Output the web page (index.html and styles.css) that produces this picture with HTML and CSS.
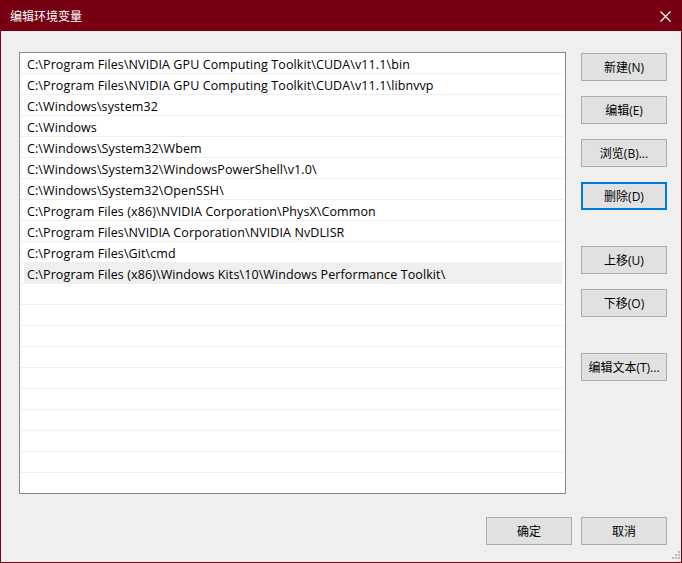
FILE: index.html
```html
<!DOCTYPE html>
<html lang="zh-CN">

<head>
    <meta charset="utf-8">
    <title>编辑环境变量</title>
    <link rel="stylesheet" href="styles.css">
</head>

<body>
    <div class="vindue">
        <div class="titel">
            <span>编辑环境变量</span>
            <svg class="luk" width="11" height="11" viewBox="0 0 11 11">
                <path d="M0.5 0.5 L10.5 10.5 M10.5 0.5 L0.5 10.5" stroke="#fff" stroke-width="1.1" fill="none"/>
            </svg>
        </div>

        <div class="indhold">
            <div class="hoved">
                <div class="liste">
                    <div class="linje"><span>C:\Program Files\NVIDIA GPU Computing Toolkit\CUDA\v11.1\bin</span></div>
                    <div class="linje"><span>C:\Program Files\NVIDIA GPU Computing Toolkit\CUDA\v11.1\libnvvp</span></div>
                    <div class="linje"><span>C:\Windows\system32</span></div>
                    <div class="linje"><span>C:\Windows</span></div>
                    <div class="linje"><span>C:\Windows\System32\Wbem</span></div>
                    <div class="linje"><span>C:\Windows\System32\WindowsPowerShell\v1.0\</span></div>
                    <div class="linje"><span>C:\Windows\System32\OpenSSH\</span></div>
                    <div class="linje"><span>C:\Program Files (x86)\NVIDIA Corporation\PhysX\Common</span></div>
                    <div class="linje"><span>C:\Program Files\NVIDIA Corporation\NVIDIA NvDLISR</span></div>
                    <div class="linje"><span>C:\Program Files\Git\cmd</span></div>
                    <div class="linje valgt"><span>C:\Program Files (x86)\Windows Kits\10\Windows Performance Toolkit\</span></div>
                    <div class="linje"><span></span></div>
                    <div class="linje"><span></span></div>
                    <div class="linje"><span></span></div>
                    <div class="linje"><span></span></div>
                    <div class="linje"><span></span></div>
                    <div class="linje"><span></span></div>
                    <div class="linje"><span></span></div>
                    <div class="linje"><span></span></div>
                    <div class="linje"><span></span></div>
                    <div class="linje"><span></span></div>
                </div>

                <div class="knapper">
                    <button class="knap">新建(N)</button>
                    <button class="knap">编辑(E)</button>
                    <button class="knap">浏览(B)...</button>
                    <button class="knap fokus">删除(D)</button>
                    <button class="knap ny-gruppe">上移(U)</button>
                    <button class="knap">下移(O)</button>
                    <button class="knap ny-gruppe">编辑文本(T)...</button>
                </div>
            </div>

            <div class="bund">
                <button class="knap">确定</button>
                <button class="knap">取消</button>
            </div>
        </div>

        <svg class="greb" width="12" height="12" viewBox="0 0 12 12">
            <rect x="9" y="1" width="2" height="2" fill="#bbb"/>
            <rect x="6" y="4" width="2" height="2" fill="#bbb"/>
            <rect x="9" y="4" width="2" height="2" fill="#bbb"/>
            <rect x="3" y="7" width="2" height="2" fill="#bbb"/>
            <rect x="6" y="7" width="2" height="2" fill="#bbb"/>
            <rect x="9" y="7" width="2" height="2" fill="#bbb"/>
        </svg>
    </div>
</body>

</html>
```

FILE: styles.css
```css
body {
    margin: 0;
    font-family: "Open Sans", "Noto Sans CJK SC", sans-serif;
    font-size: 12px;
}

.vindue {
    position: relative;
    width: 682px;
    height: 563px;
    box-sizing: border-box;
    border: 1px solid #760012;
    border-top: none;
    background-color: #efefef;
    display: flex;
    flex-direction: column;
}

.titel {
    height: 31px;
    margin: 0 -1px;
    background-color: #760012;
    color: #fff;
    display: flex;
    align-items: center;
    justify-content: space-between;
    padding: 0 11px 0 10px;
    font-family: "Noto Sans CJK SC", sans-serif;
    font-size: 12px;
}

.luk {
    margin-top: 1px;
}

.indhold {
    padding: 21px 14px 0 18px;
}

.hoved {
    display: flex;
    gap: 15px;
}

.liste {
    width: 547px;
    height: 442px;
    box-sizing: border-box;
    border: 1px solid #828790;
    background-color: #fff;
    overflow: hidden;
}

.linje {
    height: 20px;
    margin: 0 1px;
    border-bottom: 1px solid #efefef;
}

.linje span {
    display: block;
    height: 17px;
    margin: 0 2px 0 3px;
    padding: 3px 0 0 3px;
    line-height: 18px;
    font-size: 12.5px;
    letter-spacing: 0.1px;
    white-space: nowrap;
}

.valgt span {
    background-color: #efefef;
    height: 18px;
}

.knapper {
    display: flex;
    flex-direction: column;
    gap: 15px;
    padding-top: 1px;
}

.knap {
    width: 86px;
    height: 28px;
    padding: 0;
    border: 1px solid #adadad;
    background-color: #e1e1e1;
    color: #000;
    font-family: "Open Sans", "Noto Sans CJK SC", sans-serif;
    font-size: 12px;
}

.fokus {
    border: 2px solid #0078d7;
}

.ny-gruppe {
    margin-top: 21px;
}

.bund {
    display: flex;
    justify-content: flex-end;
    gap: 9px;
    margin-top: 23px;
}

.greb {
    position: absolute;
    right: 0;
    bottom: 0;
}
```
